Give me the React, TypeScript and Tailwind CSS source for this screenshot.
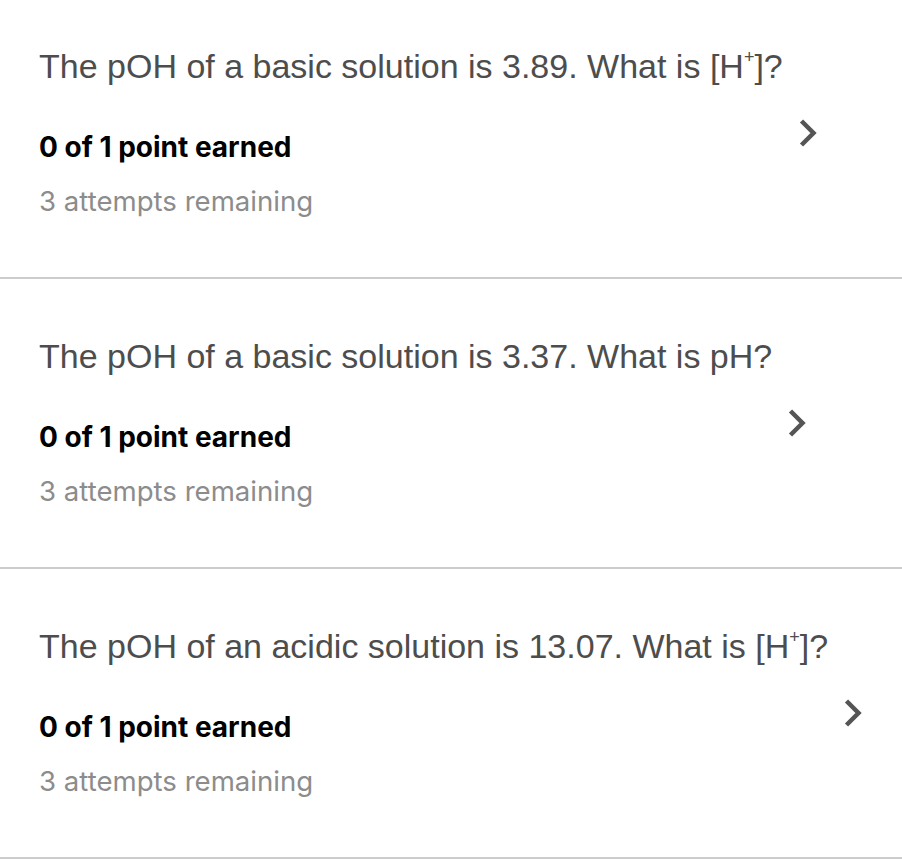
import React from "react";

type Item = {
  question: React.ReactNode;
  earned: string;
  attempts: string;
};

const Hplus = () => (
  <>
    [H<sup className="text-[18px] leading-none relative -top-[15px] align-baseline">+</sup>]
  </>
);

const items: Item[] = [
  {
    question: (
      <>
        The pOH of a basic solution is 3.89. What is <Hplus />?
      </>
    ),
    earned: "0 of 1 point earned",
    attempts: "3 attempts remaining",
  },
  {
    question: <>The pOH of a basic solution is 3.37. What is pH?</>,
    earned: "0 of 1 point earned",
    attempts: "3 attempts remaining",
  },
  {
    question: (
      <>
        The pOH of an acidic solution is 13.07. What is <Hplus />?
      </>
    ),
    earned: "0 of 1 point earned",
    attempts: "3 attempts remaining",
  },
];

function Chevron() {
  return (
    <svg width="18" height="28" viewBox="0 0 18 28" className="shrink-0 overflow-visible">
      <polyline
        points="2.5,2 14.5,14 2.5,26"
        fill="none"
        stroke="#555555"
        strokeWidth="4.5"
        strokeLinejoin="miter"
      />
    </svg>
  );
}

function QuestionRow({ item }: { item: Item }) {
  return (
    <div className="border-b-2 border-[#cccccc] pl-[39px] pt-[58px] pb-[59px]">
      <button className="flex items-center gap-4 text-left">
        <div>
          <p className="text-[34px] leading-[39px] text-[#4d4d4d] font-['Liberation_Sans',Arial,sans-serif]">
            {item.question}
          </p>
          <p className="mt-[44px] text-[28px] leading-[34px] font-bold text-black font-['Inter',sans-serif]">
            {item.earned}
          </p>
          <p className="mt-[20px] text-[27.6px] leading-[34px] text-[#8c8c8c] font-['Inter',sans-serif]">
            {item.attempts}
          </p>
        </div>
        <Chevron />
      </button>
    </div>
  );
}

export default function App() {
  return (
    <div className="min-h-screen bg-white overflow-hidden">
      <div className="-mt-[11px]">
        {items.map((item, i) => (
          <QuestionRow key={i} item={item} />
        ))}
      </div>
    </div>
  );
}
